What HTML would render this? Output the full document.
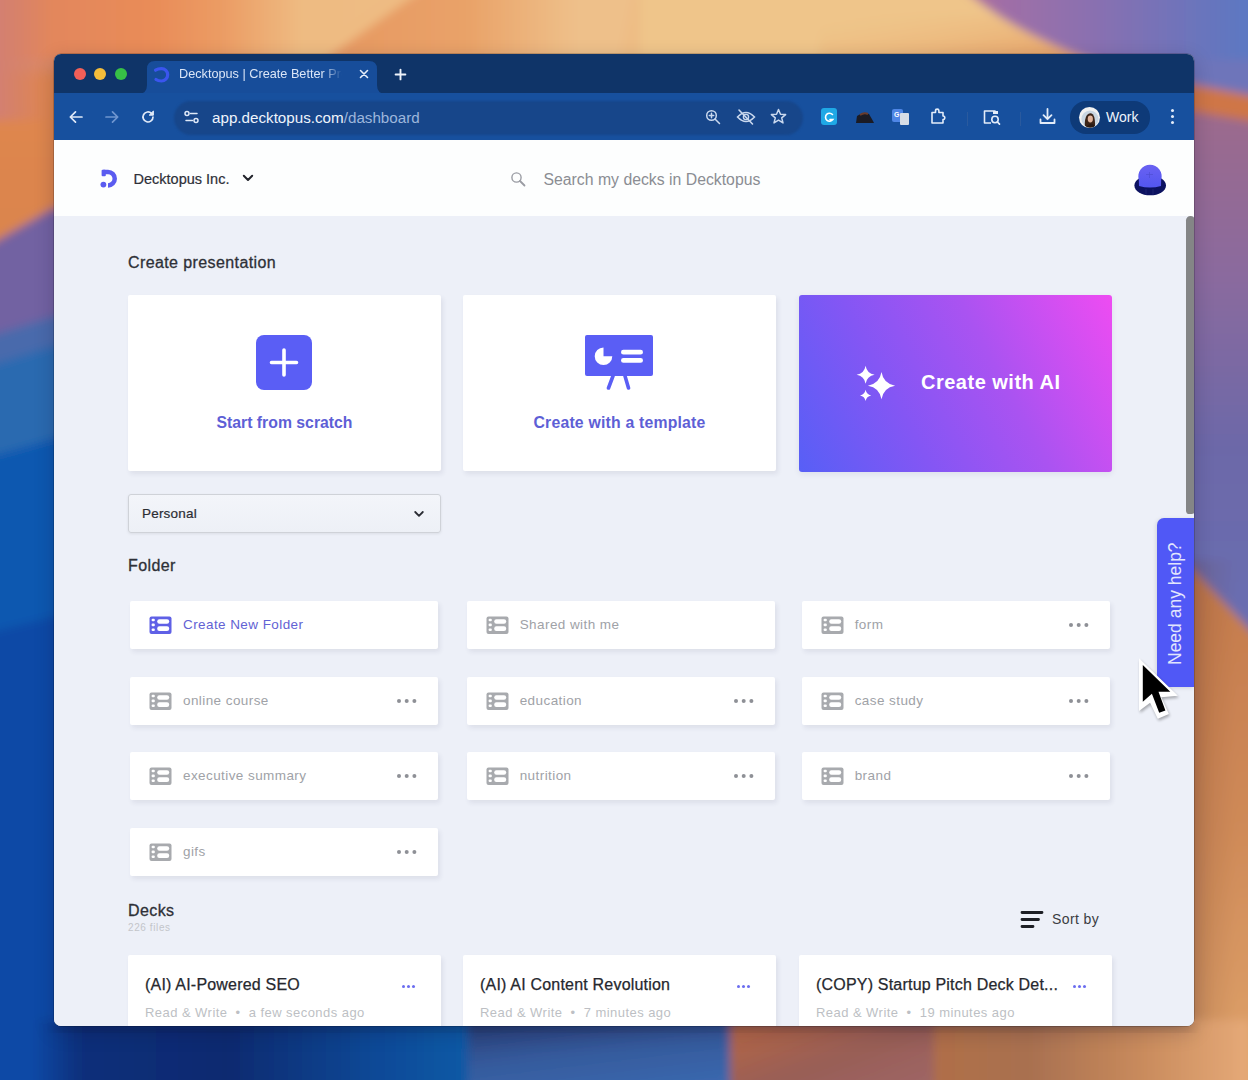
<!DOCTYPE html>
<html><head><meta charset="utf-8">
<style>
*{box-sizing:border-box;margin:0;padding:0}
html,body{width:1248px;height:1080px;overflow:hidden;font-family:"Liberation Sans",sans-serif}
body{position:relative;background:#1d4fa8}
.abs{position:absolute}
#bg{position:absolute;left:0;top:0;width:1248px;height:1080px}
#win{position:absolute;left:54px;top:54px;width:1140px;height:972px;border-radius:7px;overflow:hidden;background:#eff0f5;box-shadow:0 0 0 0.5px rgba(0,0,0,.35),0 6px 20px rgba(20,10,40,.22)}
#tabs{position:absolute;left:0;top:0;width:1140px;height:40px;background:#0f3468}
#tool{position:absolute;left:0;top:39px;width:1140px;height:47px;background:#17509e}
#page{position:absolute;left:0;top:86px;width:1140px;height:886px;background:#edf0f8}
#hdr{position:absolute;left:0;top:0;width:1140px;height:76px;background:#fdfefe}
.t{position:absolute;white-space:nowrap;line-height:1}
.card{position:absolute;background:#fff;border-radius:2px;box-shadow:2px 3px 5px rgba(50,55,85,.09)}
.title{font-size:16px;color:#2e3037;letter-spacing:.4px;-webkit-text-stroke:.3px #2e3037}
.ctext{font-size:15.8px;font-weight:bold;color:#5e5fd6}
.dots{width:4px;height:4px;border-radius:50%;background:#8e9096;box-shadow:7.7px 0 0 #8e9096,15.4px 0 0 #8e9096}
.dots2{width:3px;height:3px;border-radius:50%;background:#6b6df0;box-shadow:5px 0 0 #6b6df0,10px 0 0 #6b6df0}
.dtitle{font-size:16px;color:#26282e;letter-spacing:.2px;-webkit-text-stroke:.25px #26282e}
.dsub{font-size:13px;color:#bdbfc4;letter-spacing:.45px}
#tool svg,#tool .ic{margin-top:1px}
</style></head><body>
<svg id="bg" width="1248" height="1080" viewBox="0 0 1248 1080">
<defs>
<filter id="bl" x="-10%" y="-10%" width="120%" height="120%"><feGaussianBlur stdDeviation="5"/></filter>
<linearGradient id="gTop" x1="0" y1="0" x2="1" y2="0">
<stop offset="0" stop-color="#d27e7c"/><stop offset="0.035" stop-color="#df845e"/><stop offset="0.17" stop-color="#e98c58"/><stop offset="0.23" stop-color="#eb9c64"/><stop offset="0.3" stop-color="#eebb82"/><stop offset="1" stop-color="#eebf88"/>
</linearGradient>
<linearGradient id="gOr2" x1="0" y1="0" x2="1" y2="0">
<stop offset="0" stop-color="#e69862"/><stop offset="0.45" stop-color="#e9a268"/><stop offset="0.8" stop-color="#eec08a"/>
</linearGradient>
<linearGradient id="gOr3" x1="0" y1="0" x2="1" y2="1">
<stop offset="0" stop-color="#efc68a" stop-opacity="0"/><stop offset="1" stop-color="#e49a60"/>
</linearGradient>
<linearGradient id="gPB" x1="0" y1="0" x2="1" y2="0">
<stop offset="0" stop-color="#c8708c"/><stop offset="0.2" stop-color="#a06ea6"/><stop offset="0.45" stop-color="#8a70b0"/><stop offset="0.75" stop-color="#6a74bc"/><stop offset="1" stop-color="#4f7cc8"/>
</linearGradient>
<linearGradient id="gLeft" x1="0" y1="0" x2="0" y2="1">
<stop offset="0" stop-color="#d98a6c"/><stop offset="0.08" stop-color="#e0864f"/><stop offset="1" stop-color="#d8844c"/>
</linearGradient>
<linearGradient id="gBlueL" x1="0" y1="0" x2="0" y2="1">
<stop offset="0" stop-color="#6863a4"/><stop offset="0.1" stop-color="#5a68aa"/><stop offset="0.2" stop-color="#3f70b0"/><stop offset="0.32" stop-color="#1c5cb0"/><stop offset="0.6" stop-color="#0c48a6"/><stop offset="1" stop-color="#0a3e98"/>
</linearGradient>
<linearGradient id="gRightO" x1="0" y1="0" x2="0" y2="1">
<stop offset="0" stop-color="#c47a4c"/><stop offset="0.5" stop-color="#cf8a58"/><stop offset="1" stop-color="#e0a46c"/>
</linearGradient>
<linearGradient id="gPurpR" x1="0" y1="0" x2="0" y2="1">
<stop offset="0" stop-color="#9c6a8c"/><stop offset="0.3" stop-color="#8a6a9e"/><stop offset="0.6" stop-color="#6c68a8"/><stop offset="1" stop-color="#6a70b4"/>
</linearGradient>
<linearGradient id="gBotL" x1="0" y1="0" x2="1" y2="0">
<stop offset="0" stop-color="#0b4aa8"/><stop offset="0.12" stop-color="#0a2f7a"/><stop offset="0.45" stop-color="#0a2a70"/><stop offset="0.8" stop-color="#0b4a98"/><stop offset="1" stop-color="#0a5aa6"/>
</linearGradient>
<linearGradient id="gBotR" x1="0" y1="0" x2="1" y2="0">
<stop offset="0" stop-color="#b06e48"/><stop offset="0.3" stop-color="#a87050"/><stop offset="0.65" stop-color="#c88a5c"/><stop offset="1" stop-color="#e6aa78"/>
</linearGradient>
<linearGradient id="gBM" x1="0" y1="0" x2="0.4" y2="1"><stop offset="0" stop-color="#273c74"/><stop offset="0.5" stop-color="#355a9c"/><stop offset="1" stop-color="#3a68ae"/></linearGradient>
<linearGradient id="gBR1" x1="0" y1="0" x2="1" y2="1"><stop offset="0" stop-color="#b86844"/><stop offset="0.5" stop-color="#985e56"/><stop offset="1" stop-color="#a0686a"/></linearGradient>
<linearGradient id="gPink" x1="0" y1="0" x2="1" y2="0"><stop offset="0" stop-color="#d07e86"/><stop offset="0.45" stop-color="#d38070"/><stop offset="1" stop-color="#d38070" stop-opacity="0"/></linearGradient>
<linearGradient id="gShR" x1="0" y1="0" x2="1" y2="0"><stop offset="0.1" stop-color="#6a3a28" stop-opacity=".22"/><stop offset="0.7" stop-color="#6a3a28" stop-opacity="0"/></linearGradient>
</defs>
<rect width="1248" height="1080" fill="#0d48a6"/>
<g filter="url(#bl)">
<polygon points="-40,-40 1000,-40 1100,60 1100,300 54,300 54,208 -40,262" fill="url(#gTop)"/>
<polygon points="-40,60 60,60 60,300 54,208 -40,262" fill="url(#gLeft)"/>
<polygon points="464,-40 640,-40 620,60 324,60" fill="url(#gOr2)"/>
<path d="M640,-40 L930,-40 C975,0 1000,25 1090,60 L640,60Z" fill="#efc58a"/>
<path d="M820,15 L1005,15 C1030,35 1050,45 1090,60 L820,60Z" fill="url(#gOr3)"/>
<path d="M930,-40 C975,0 1000,25 1090,60 L1290,104 L1290,-40Z" fill="url(#gPB)"/>
<rect x="-40" y="-40" width="90" height="160" fill="url(#gPink)"/>
<polygon points="-40,262 54,208 120,208 120,1100 -40,1100" fill="#0c48a6"/>
<polygon points="-40,262 54,208 120,208 120,300 -40,350" fill="#7262a2"/>
<polygon points="-40,345 120,296 120,330 -40,380" fill="#4a6aac"/>
<polygon points="-40,375 120,325 120,425 -40,470" fill="#2a6bb0"/>
<polygon points="-40,465 120,420 120,600 -40,640" fill="#0c58b0"/>
<polygon points="1180,60 1290,60 1290,104 1180,82" fill="#6e74ba"/>
<polygon points="1180,82 1290,103 1290,128 1180,110" fill="#cf7646"/>
<polygon points="1180,110 1290,128 1290,672 1180,556" fill="url(#gPurpR)"/>
<polygon points="1180,556 1290,672 1290,1100 1180,1100" fill="url(#gRightO)"/>
<rect x="1180" y="560" width="80" height="520" fill="url(#gShR)"/>
<polygon points="30,1020 470,1020 470,1100 30,1100" fill="url(#gBotL)"/>
<polygon points="468,1020 732,1020 732,1100 468,1100" fill="url(#gBM)"/>
<polygon points="730,1020 936,1020 936,1100 730,1100" fill="url(#gBR1)"/>
<polygon points="934,1020 1250,1020 1250,1100 934,1100" fill="url(#gBotR)"/>
</g>
<rect x="54" y="1024" width="1140" height="8" fill="#000" opacity="0.12" filter="url(#bl)"/>
</svg>
<div id="win">
 <div id="tabs">
  <div class="abs" style="left:20px;top:14px;width:12px;height:12px;border-radius:50%;background:#f25f58"></div>
  <div class="abs" style="left:40px;top:14px;width:12px;height:12px;border-radius:50%;background:#f5bd3a"></div>
  <div class="abs" style="left:61px;top:14px;width:12px;height:12px;border-radius:50%;background:#37c146"></div>
  <svg class="abs" style="left:84px;top:6px" width="248" height="34" viewBox="0 0 248 34">
   <path d="M0,34 Q9,34 9,25 L9,9 Q9,1 17,1 L231,1 Q239,1 239,9 L239,25 Q239,34 248,34 Z" fill="#174d9a"/>
  </svg>
  <svg class="abs" style="left:99px;top:12px" width="18" height="18" viewBox="0 0 18 18"><path d="M2.5,4.2 Q5,2.6 8.5,2.6 A6.2,6.2 0 0 1 8.5,15 Q5,15 3,13.5" fill="none" stroke="#3a55ee" stroke-width="3.2" stroke-linecap="round"/></svg>
  <div class="t" style="left:125px;top:14px;font-size:12.7px;color:#dbe6f7;width:175px;overflow:hidden;-webkit-mask-image:linear-gradient(90deg,#000 143px,transparent 163px)">Decktopus | Create Better Presentations</div>
  <svg class="abs" style="left:305px;top:15px" width="10" height="10" viewBox="0 0 10 10"><path d="M1.5,1.5L8.5,8.5M8.5,1.5L1.5,8.5" stroke="#e6eefa" stroke-width="1.6" stroke-linecap="round"/></svg>
  <svg class="abs" style="left:340px;top:14px" width="13" height="13" viewBox="0 0 13 13"><path d="M6.5,1.6V11.4M1.6,6.5H11.4" stroke="#eef3fb" stroke-width="1.9" stroke-linecap="round"/></svg>
 </div>
 <div id="tool">
  <svg class="abs" style="left:14px;top:15px" width="16" height="16" viewBox="0 0 16 16"><path d="M14,8H2.5M7.5,2.8L2.3,8L7.5,13.2" fill="none" stroke="#dfe9f8" stroke-width="1.7" stroke-linecap="round" stroke-linejoin="round"/></svg>
  <svg class="abs" style="left:50px;top:15px" width="16" height="16" viewBox="0 0 16 16"><path d="M2,8H13.5M8.5,2.8L13.7,8L8.5,13.2" fill="none" stroke="#6f95cf" stroke-width="1.7" stroke-linecap="round" stroke-linejoin="round"/></svg>
  <svg class="abs" style="left:86px;top:15px" width="16" height="16" viewBox="0 0 16 16"><path d="M13,8A5,5 0 1 1 11.5,4.4" fill="none" stroke="#dfe9f8" stroke-width="1.7" stroke-linecap="round"/><path d="M13.4,2V6.2H9.2Z" fill="#dfe9f8" stroke="#dfe9f8" stroke-width="1" stroke-linejoin="round"/></svg>
  <div class="abs" style="left:120px;top:7.5px;width:629px;height:34px;border-radius:17px;background:#17468a;filter:blur(1.2px)"></div>
  <svg class="abs" style="left:130px;top:16px" width="16" height="14" viewBox="0 0 16 14"><circle cx="3" cy="3.5" r="2" fill="none" stroke="#dfe9f8" stroke-width="1.5"/><path d="M6.5,3.5H13" stroke="#dfe9f8" stroke-width="1.5" stroke-linecap="round"/><circle cx="12" cy="10.5" r="2" fill="none" stroke="#dfe9f8" stroke-width="1.5"/><path d="M2,10.5H8.5" stroke="#dfe9f8" stroke-width="1.5" stroke-linecap="round"/></svg>
  <div class="t" style="left:158px;top:17.3px;font-size:15.2px;color:#eef4fc">app.decktopus.com<span style="color:#9db6dc">/dashboard</span></div>
  <svg class="abs" style="left:651px;top:15px" width="16" height="16" viewBox="0 0 16 16"><circle cx="6.5" cy="6.5" r="4.8" fill="none" stroke="#c9d8ee" stroke-width="1.5"/><path d="M10,10L14.5,14.5M4.3,6.5H8.7M6.5,4.3V8.7" stroke="#c9d8ee" stroke-width="1.5" stroke-linecap="round"/></svg>
  <svg class="abs" style="left:682px;top:14px" width="20" height="18" viewBox="0 0 20 18"><path d="M1.5,9Q10,0 18.5,9Q10,18 1.5,9Z" fill="none" stroke="#c9d8ee" stroke-width="1.5"/><circle cx="10" cy="9" r="2.6" fill="none" stroke="#c9d8ee" stroke-width="1.4"/><path d="M3,2L16.5,16" stroke="#c9d8ee" stroke-width="1.6" stroke-linecap="round"/></svg>
  <svg class="abs" style="left:716px;top:14px" width="17" height="17" viewBox="0 0 17 17"><path d="M8.5,1.5L10.5,6.3L15.6,6.6L11.7,9.9L13,14.9L8.5,12.1L4,14.9L5.3,9.9L1.4,6.6L6.5,6.3Z" fill="none" stroke="#c9d8ee" stroke-width="1.5" stroke-linejoin="round"/></svg>
  <div class="abs" style="left:767px;top:15px;width:16px;height:17px;border-radius:3px;background:#1fa8e6"></div>
  <svg class="abs" style="left:769px;top:17px" width="12" height="13" viewBox="0 0 12 13"><path d="M9.5,3.5A4,4 0 1 0 9.8,8.5L7,8.5" fill="none" stroke="#fff" stroke-width="1.6" stroke-linecap="round"/></svg>
  <svg class="abs" style="left:800px;top:18px" width="22" height="12" viewBox="0 0 22 12"><path d="M3,4Q8,0 15,2L19,9L20,11H2Z" fill="#1b1b24"/><path d="M6,3Q10,0 14,2" stroke="#6a3b2a" stroke-width="2" fill="none"/></svg>
  <div class="abs" style="left:838px;top:16px;width:11px;height:13px;border-radius:2px;background:#4f86e6"></div>
  <div class="abs" style="left:846px;top:20px;width:9px;height:12px;border-radius:1px;background:#d7dde6"></div>
  <div class="t" style="left:840px;top:18px;font-size:7px;color:#fff;font-weight:bold">G</div>
  <svg class="abs" style="left:875px;top:13px" width="19" height="19" viewBox="0 0 19 19"><path d="M3,5.5H6.5V3.8A1.7,1.7 0 0 1 9.9,3.8V5.5H14V9A1.8,1.8 0 0 1 14,12.6V16H3Z" fill="none" stroke="#e3ecf9" stroke-width="1.6" stroke-linejoin="round"/></svg>
  <div class="abs" style="left:913px;top:19px;width:1px;height:14px;background:#2a5a9e"></div>
  <svg class="abs" style="left:928px;top:14px" width="20" height="19" viewBox="0 0 20 19"><path d="M9,15H2.5V3H13V6" fill="none" stroke="#e3ecf9" stroke-width="1.6" stroke-linejoin="round"/><rect x="11" y="3" width="5" height="3" fill="#e3ecf9"/><circle cx="13" cy="11.5" r="3.2" fill="none" stroke="#e3ecf9" stroke-width="1.6"/><path d="M15.4,14L17.5,16.2" stroke="#e3ecf9" stroke-width="1.7" stroke-linecap="round"/></svg>
  <div class="abs" style="left:966px;top:19px;width:1px;height:14px;background:#2a5a9e"></div>
  <svg class="abs" style="left:984px;top:13px" width="19" height="19" viewBox="0 0 19 19"><path d="M9.5,2V12M5.5,8.2L9.5,12.2L13.5,8.2" fill="none" stroke="#e3ecf9" stroke-width="1.8" stroke-linecap="round" stroke-linejoin="round"/><path d="M2.5,12.5V16H16.5V12.5" fill="none" stroke="#e3ecf9" stroke-width="1.8" stroke-linecap="round" stroke-linejoin="round"/></svg>
  <div class="abs" style="left:1016px;top:8px;width:80px;height:33px;border-radius:16px;background:#0e3a78"></div>
  <div class="abs" style="left:1025px;top:14px;width:21px;height:21px;border-radius:50%;background:#f2f2f2"></div>
  <svg class="abs ic" style="left:1026.5px;top:15.5px" width="18" height="18" viewBox="0 0 18 18"><defs><clipPath id="avc"><circle cx="9" cy="9" r="8.6"/></clipPath></defs><g clip-path="url(#avc)"><rect width="18" height="18" fill="#c9d6e2"/><path d="M4,18 Q3,9 6,5 Q9,2 12,4.5 Q14.5,8 14,18Z" fill="#3b2418"/><ellipse cx="9.3" cy="9" rx="2.6" ry="3.4" fill="#e1b49c"/><path d="M5,18 Q8,13 12,14 Q14,15 14,18Z" fill="#2a1a14"/></g></svg>
  <div class="t" style="left:1052px;top:17px;font-size:14px;color:#eef4fc">Work</div>
  <div class="abs" style="left:1117.2px;top:16.2px;width:3px;height:3px;border-radius:50%;background:#e3ecf9;box-shadow:0 6px 0 #e3ecf9,0 12px 0 #e3ecf9"></div>
 </div>
 <div id="page">
  <div id="hdr">
   <svg class="abs" style="left:45px;top:29px" width="20" height="20" viewBox="0 0 20 20"><path d="M4.2,2.9 L9,2.9 A6.75,6.75 0 0 1 9,16.4" fill="none" stroke="#5b5cf0" stroke-width="4.5"/><rect x="2.6" y="0.7" width="4.2" height="6.6" rx="1" fill="#5b5cf0"/><circle cx="4.4" cy="15.6" r="2.9" fill="#5b5cf0"/></svg>
   <div class="t" style="left:79.5px;top:31.5px;font-size:14.5px;color:#2e3038;-webkit-text-stroke:.2px #2e3038">Decktopus Inc.</div>
   <svg class="abs" style="left:188px;top:33px" width="12" height="10" viewBox="0 0 12 10"><path d="M1.8,2.8L6,7L10.2,2.8" fill="none" stroke="#23252c" stroke-width="2" stroke-linecap="round" stroke-linejoin="round"/></svg>
   <svg class="abs" style="left:456px;top:31px" width="17" height="17" viewBox="0 0 17 17"><circle cx="6.5" cy="6.5" r="4.6" fill="none" stroke="#9a9ca3" stroke-width="1.4"/><path d="M10,10L14.5,14.5" stroke="#9a9ca3" stroke-width="1.8" stroke-linecap="round"/></svg>
   <div class="t" style="left:489.5px;top:31.6px;font-size:15.8px;color:#8b8d93">Search my decks in Decktopus</div>
   <svg class="abs" style="left:1080px;top:24px" width="34" height="34" viewBox="0 0 34 34"><defs><linearGradient id="avg" x1="0" y1="0" x2="0" y2="1"><stop offset="0" stop-color="#6a62f2"/><stop offset="1" stop-color="#5256f0"/></linearGradient></defs><ellipse cx="16.2" cy="21.5" rx="15.8" ry="9.8" fill="#0c1260"/><path d="M4.84,16 A11.7,11.7 0 1 1 27.16,16 L27,22 Q16,25.2 5,22 Z" fill="url(#avg)"/><path d="M15.5,8V14M12,10.5H19" stroke="#3e40b8" stroke-width=".7" opacity=".5"/><path d="M12,25V31M19,25V31" stroke="#4a4fa0" stroke-width=".8" opacity=".35"/></svg>
  </div>
  <div class="t title" style="left:74px;top:114.5px">Create presentation</div>
  <div class="card" style="left:74px;top:155px;width:313px;height:176px">
   <div class="abs" style="left:128px;top:40px;width:56px;height:55px;border-radius:8px;background:#5a5ef5"></div>
   <svg class="abs" style="left:128px;top:40px" width="56" height="55" viewBox="0 0 56 55"><path d="M28,15V40M15.5,27.5H40.5" stroke="#fff" stroke-width="3.6" stroke-linecap="round"/></svg>
   <div class="t ctext" style="left:0;width:313px;text-align:center;top:120px">Start from scratch</div>
  </div>
  <div class="card" style="left:409px;top:155px;width:313px;height:176px">
   <svg class="abs" style="left:121px;top:39px" width="72" height="56" viewBox="0 0 72 56"><rect x="1" y="1" width="68" height="41" rx="2" fill="#5a5ef5"/><path d="M29,42L24.5,54M41,42L44.5,54" stroke="#5a5ef5" stroke-width="3.6" stroke-linecap="round"/><path d="M19.5,13.5A8.8,8.8 0 1 0 28.3,22.3L19.5,22.3Z" fill="#fff"/><path d="M39.4,18.2H56.6M39.4,26.4H56.6" stroke="#fff" stroke-width="4.8" stroke-linecap="round"/></svg>
   <div class="t ctext" style="left:0;width:313px;text-align:center;top:120px;letter-spacing:.2px">Create with a template</div>
  </div>
  <div class="abs" style="left:745px;top:155px;width:313px;height:177px;border-radius:3px;background:linear-gradient(62deg,#575ff6 0%,#8456f4 33%,#aa53f1 62%,#ee4cf2 100%);box-shadow:0 2px 6px rgba(30,40,80,.08)">
   <svg class="abs" style="left:56px;top:70px" width="42" height="38" viewBox="0 0 42 38"><path d="M26.50,7.10 Q28.40,18.80 40.10,20.70 Q28.40,22.60 26.50,34.30 Q24.60,22.60 12.90,20.70 Q24.60,18.80 26.50,7.10Z" fill="#fff"/><path d="M10.60,0.80 Q11.86,8.54 19.60,9.80 Q11.86,11.06 10.60,18.80 Q9.34,11.06 1.60,9.80 Q9.34,8.54 10.60,0.80Z" fill="#fff"/><path d="M10.60,24.80 Q11.50,29.50 16.20,30.40 Q11.50,31.30 10.60,36.00 Q9.70,31.30 5.00,30.40 Q9.70,29.50 10.60,24.80Z" fill="#fff"/></svg>
   <div class="t" style="left:122px;top:77px;font-size:20px;font-weight:bold;color:#fff;letter-spacing:.5px">Create with AI</div>
  </div>
  <div class="abs" style="left:74px;top:354px;width:313px;height:39px;border:1px solid #cfd2d8;border-radius:3px;background:linear-gradient(#f3f5fa,#edf0f6);box-shadow:0 1px 3px rgba(0,0,0,.08)">
   <div class="t" style="left:13px;top:12px;font-size:13.5px;color:#2b2d33;letter-spacing:.2px;-webkit-text-stroke:.2px #2b2d33">Personal</div>
   <svg class="abs" style="left:284px;top:14px" width="12" height="10" viewBox="0 0 12 10"><path d="M2.2,3L6,6.8L9.8,3" fill="none" stroke="#2a2c33" stroke-width="1.8" stroke-linecap="round" stroke-linejoin="round"/></svg>
  </div>
  <div class="t title" style="left:74px;top:418px">Folder</div>
<div class="card fc" style="left:75.8px;top:461px;width:308px;height:48px"><svg class="abs" style="left:19.2px;top:15px" width="23" height="19" viewBox="0 0 23 19"><rect x="0.5" y="0.5" width="22" height="17.5" rx="2" fill="#5f60e6"/><rect x="2.6" y="2.8" width="3.2" height="2.4" rx="1" fill="#fff"/><rect x="2.6" y="7.6" width="3.2" height="2.6" rx="1" fill="#fff"/><rect x="2.6" y="12.4" width="3.2" height="2.6" rx="1" fill="#fff"/><rect x="8.2" y="3.2" width="12" height="4.6" rx="2.2" fill="#fff"/><rect x="8.2" y="10.3" width="12" height="4.6" rx="2.2" fill="#fff"/></svg><div class="t" style="left:53.2px;top:17px;font-size:13.5px;color:#6262d4;letter-spacing:.42px">Create New Folder</div></div>
<div class="card fc" style="left:412.5px;top:461px;width:308px;height:48px"><svg class="abs" style="left:19.2px;top:15px" width="23" height="19" viewBox="0 0 23 19"><rect x="0.5" y="0.5" width="22" height="17.5" rx="2" fill="#a8aaae"/><rect x="2.6" y="2.8" width="3.2" height="2.4" rx="1" fill="#fff"/><rect x="2.6" y="7.6" width="3.2" height="2.6" rx="1" fill="#fff"/><rect x="2.6" y="12.4" width="3.2" height="2.6" rx="1" fill="#fff"/><rect x="8.2" y="3.2" width="12" height="4.6" rx="2.2" fill="#fff"/><rect x="8.2" y="10.3" width="12" height="4.6" rx="2.2" fill="#fff"/></svg><div class="t" style="left:53.2px;top:17px;font-size:13.5px;color:#a0a2a7;letter-spacing:.42px">Shared with me</div></div>
<div class="card fc" style="left:747.5px;top:461px;width:308px;height:48px"><svg class="abs" style="left:19.2px;top:15px" width="23" height="19" viewBox="0 0 23 19"><rect x="0.5" y="0.5" width="22" height="17.5" rx="2" fill="#a8aaae"/><rect x="2.6" y="2.8" width="3.2" height="2.4" rx="1" fill="#fff"/><rect x="2.6" y="7.6" width="3.2" height="2.6" rx="1" fill="#fff"/><rect x="2.6" y="12.4" width="3.2" height="2.6" rx="1" fill="#fff"/><rect x="8.2" y="3.2" width="12" height="4.6" rx="2.2" fill="#fff"/><rect x="8.2" y="10.3" width="12" height="4.6" rx="2.2" fill="#fff"/></svg><div class="t" style="left:53.2px;top:17px;font-size:13.5px;color:#a0a2a7;letter-spacing:.42px">form</div><div class="abs dots" style="left:267.2px;top:22px"></div></div>
<div class="card fc" style="left:75.8px;top:536.6px;width:308px;height:48px"><svg class="abs" style="left:19.2px;top:15px" width="23" height="19" viewBox="0 0 23 19"><rect x="0.5" y="0.5" width="22" height="17.5" rx="2" fill="#a8aaae"/><rect x="2.6" y="2.8" width="3.2" height="2.4" rx="1" fill="#fff"/><rect x="2.6" y="7.6" width="3.2" height="2.6" rx="1" fill="#fff"/><rect x="2.6" y="12.4" width="3.2" height="2.6" rx="1" fill="#fff"/><rect x="8.2" y="3.2" width="12" height="4.6" rx="2.2" fill="#fff"/><rect x="8.2" y="10.3" width="12" height="4.6" rx="2.2" fill="#fff"/></svg><div class="t" style="left:53.2px;top:17px;font-size:13.5px;color:#a0a2a7;letter-spacing:.42px">online course</div><div class="abs dots" style="left:267.2px;top:22px"></div></div>
<div class="card fc" style="left:412.5px;top:536.6px;width:308px;height:48px"><svg class="abs" style="left:19.2px;top:15px" width="23" height="19" viewBox="0 0 23 19"><rect x="0.5" y="0.5" width="22" height="17.5" rx="2" fill="#a8aaae"/><rect x="2.6" y="2.8" width="3.2" height="2.4" rx="1" fill="#fff"/><rect x="2.6" y="7.6" width="3.2" height="2.6" rx="1" fill="#fff"/><rect x="2.6" y="12.4" width="3.2" height="2.6" rx="1" fill="#fff"/><rect x="8.2" y="3.2" width="12" height="4.6" rx="2.2" fill="#fff"/><rect x="8.2" y="10.3" width="12" height="4.6" rx="2.2" fill="#fff"/></svg><div class="t" style="left:53.2px;top:17px;font-size:13.5px;color:#a0a2a7;letter-spacing:.42px">education</div><div class="abs dots" style="left:267.2px;top:22px"></div></div>
<div class="card fc" style="left:747.5px;top:536.6px;width:308px;height:48px"><svg class="abs" style="left:19.2px;top:15px" width="23" height="19" viewBox="0 0 23 19"><rect x="0.5" y="0.5" width="22" height="17.5" rx="2" fill="#a8aaae"/><rect x="2.6" y="2.8" width="3.2" height="2.4" rx="1" fill="#fff"/><rect x="2.6" y="7.6" width="3.2" height="2.6" rx="1" fill="#fff"/><rect x="2.6" y="12.4" width="3.2" height="2.6" rx="1" fill="#fff"/><rect x="8.2" y="3.2" width="12" height="4.6" rx="2.2" fill="#fff"/><rect x="8.2" y="10.3" width="12" height="4.6" rx="2.2" fill="#fff"/></svg><div class="t" style="left:53.2px;top:17px;font-size:13.5px;color:#a0a2a7;letter-spacing:.42px">case study</div><div class="abs dots" style="left:267.2px;top:22px"></div></div>
<div class="card fc" style="left:75.8px;top:612.2px;width:308px;height:48px"><svg class="abs" style="left:19.2px;top:15px" width="23" height="19" viewBox="0 0 23 19"><rect x="0.5" y="0.5" width="22" height="17.5" rx="2" fill="#a8aaae"/><rect x="2.6" y="2.8" width="3.2" height="2.4" rx="1" fill="#fff"/><rect x="2.6" y="7.6" width="3.2" height="2.6" rx="1" fill="#fff"/><rect x="2.6" y="12.4" width="3.2" height="2.6" rx="1" fill="#fff"/><rect x="8.2" y="3.2" width="12" height="4.6" rx="2.2" fill="#fff"/><rect x="8.2" y="10.3" width="12" height="4.6" rx="2.2" fill="#fff"/></svg><div class="t" style="left:53.2px;top:17px;font-size:13.5px;color:#a0a2a7;letter-spacing:.42px">executive summary</div><div class="abs dots" style="left:267.2px;top:22px"></div></div>
<div class="card fc" style="left:412.5px;top:612.2px;width:308px;height:48px"><svg class="abs" style="left:19.2px;top:15px" width="23" height="19" viewBox="0 0 23 19"><rect x="0.5" y="0.5" width="22" height="17.5" rx="2" fill="#a8aaae"/><rect x="2.6" y="2.8" width="3.2" height="2.4" rx="1" fill="#fff"/><rect x="2.6" y="7.6" width="3.2" height="2.6" rx="1" fill="#fff"/><rect x="2.6" y="12.4" width="3.2" height="2.6" rx="1" fill="#fff"/><rect x="8.2" y="3.2" width="12" height="4.6" rx="2.2" fill="#fff"/><rect x="8.2" y="10.3" width="12" height="4.6" rx="2.2" fill="#fff"/></svg><div class="t" style="left:53.2px;top:17px;font-size:13.5px;color:#a0a2a7;letter-spacing:.42px">nutrition</div><div class="abs dots" style="left:267.2px;top:22px"></div></div>
<div class="card fc" style="left:747.5px;top:612.2px;width:308px;height:48px"><svg class="abs" style="left:19.2px;top:15px" width="23" height="19" viewBox="0 0 23 19"><rect x="0.5" y="0.5" width="22" height="17.5" rx="2" fill="#a8aaae"/><rect x="2.6" y="2.8" width="3.2" height="2.4" rx="1" fill="#fff"/><rect x="2.6" y="7.6" width="3.2" height="2.6" rx="1" fill="#fff"/><rect x="2.6" y="12.4" width="3.2" height="2.6" rx="1" fill="#fff"/><rect x="8.2" y="3.2" width="12" height="4.6" rx="2.2" fill="#fff"/><rect x="8.2" y="10.3" width="12" height="4.6" rx="2.2" fill="#fff"/></svg><div class="t" style="left:53.2px;top:17px;font-size:13.5px;color:#a0a2a7;letter-spacing:.42px">brand</div><div class="abs dots" style="left:267.2px;top:22px"></div></div>
<div class="card fc" style="left:75.8px;top:687.8px;width:308px;height:48px"><svg class="abs" style="left:19.2px;top:15px" width="23" height="19" viewBox="0 0 23 19"><rect x="0.5" y="0.5" width="22" height="17.5" rx="2" fill="#a8aaae"/><rect x="2.6" y="2.8" width="3.2" height="2.4" rx="1" fill="#fff"/><rect x="2.6" y="7.6" width="3.2" height="2.6" rx="1" fill="#fff"/><rect x="2.6" y="12.4" width="3.2" height="2.6" rx="1" fill="#fff"/><rect x="8.2" y="3.2" width="12" height="4.6" rx="2.2" fill="#fff"/><rect x="8.2" y="10.3" width="12" height="4.6" rx="2.2" fill="#fff"/></svg><div class="t" style="left:53.2px;top:17px;font-size:13.5px;color:#a0a2a7;letter-spacing:.42px">gifs</div><div class="abs dots" style="left:267.2px;top:22px"></div></div>

  <div class="t title" style="left:74px;top:763px">Decks</div>
  <div class="t" style="left:74px;top:783px;font-size:10px;color:#c3c5ca;letter-spacing:.6px">226 files</div>
  <svg class="abs" style="left:966px;top:770px" width="24" height="19" viewBox="0 0 24 19"><path d="M2,2.5H22M2,9.5H18.5M2,16.5H13" stroke="#1d1f25" stroke-width="2.8" stroke-linecap="round"/></svg>
  <div class="t" style="left:998px;top:771.5px;font-size:14px;color:#3a3c42;letter-spacing:.4px">Sort by</div>
  <div class="card" style="left:74px;top:815px;width:313px;height:120px">
   <div class="t dtitle" style="left:17px;top:22px">(AI) AI-Powered SEO</div>
   <div class="abs dots2" style="left:274px;top:30px"></div>
   <div class="t dsub" style="left:17px;top:50.5px">Read &amp; Write &nbsp;•&nbsp; a few seconds ago</div>
  </div>
  <div class="card" style="left:409px;top:815px;width:313px;height:120px">
   <div class="t dtitle" style="left:17px;top:22px">(AI) AI Content Revolution</div>
   <div class="abs dots2" style="left:274px;top:30px"></div>
   <div class="t dsub" style="left:17px;top:50.5px">Read &amp; Write &nbsp;•&nbsp; 7 minutes ago</div>
  </div>
  <div class="card" style="left:745px;top:815px;width:313px;height:120px">
   <div class="t dtitle" style="left:17px;top:22px">(COPY) Startup Pitch Deck Det...</div>
   <div class="abs dots2" style="left:274px;top:30px"></div>
   <div class="t dsub" style="left:17px;top:50.5px">Read &amp; Write &nbsp;•&nbsp; 19 minutes ago</div>
  </div>
  <div class="abs" style="left:1132px;top:76px;width:9px;height:298px;border-radius:5px 5px 4px 4px;background:#848586"></div>
  <div class="abs" style="left:1103px;top:378px;width:37px;height:169px;border-radius:7px 0 0 7px;background:#5058f6;box-shadow:-1px 1px 4px rgba(0,0,0,.12)">
   <div class="t" style="left:10px;top:146.5px;transform:rotate(-90deg);transform-origin:0 0;font-size:17.5px;color:#e2e6fd">Need any help?</div>
  </div>

 </div>
</div>
<svg class="abs" style="left:1120px;top:640px" width="80" height="100" viewBox="1120 640 80 100"><defs><filter id="csh" x="-30%" y="-30%" width="160%" height="160%"><feGaussianBlur stdDeviation="1.6"/></filter></defs>
<path d="M1139,658.3L1139,711.1L1150.1,702.8L1157.8,718.75L1168.9,713.9L1161.25,697.2L1177.9,695.8Z" fill="#000" opacity=".3" transform="translate(1,2)" filter="url(#csh)"/>
<path d="M1139,658.3L1139,711.1L1150.1,702.8L1157.8,718.75L1168.9,713.9L1161.25,697.2L1177.9,695.8Z" fill="#fff"/>
<path d="M1142.8,664.9L1142.8,701.7L1151.9,693.75L1159.2,712.8L1165.4,710.4L1158.5,691.7L1170.3,691.7Z" fill="#000"/></svg>
</body></html>
